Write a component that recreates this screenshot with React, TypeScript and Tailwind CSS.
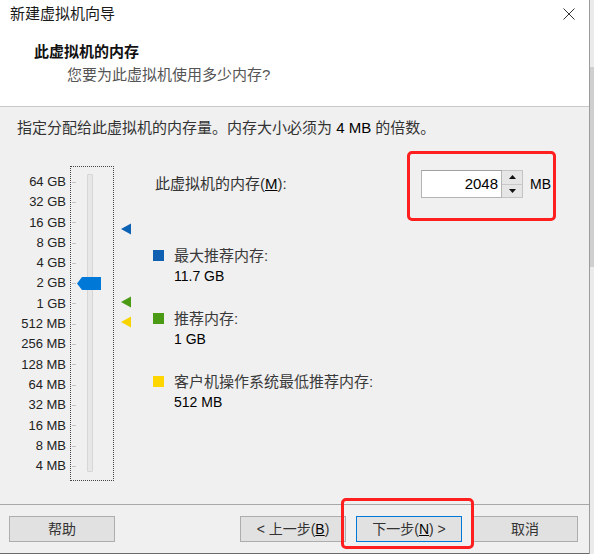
import React from "react";

const FONT = "font-['Liberation_Sans','Noto_Sans_CJK_SC',sans-serif]";

const sizes = [
  "64 GB", "32 GB", "16 GB", "8 GB", "4 GB", "2 GB", "1 GB",
  "512 MB", "256 MB", "128 MB", "64 MB", "32 MB", "16 MB", "8 MB", "4 MB",
];

function Btn({ children, primary }: { children: React.ReactNode; primary?: boolean }) {
  return (
    <div
      className={
        "w-[106px] h-[26px] flex items-center justify-center text-[14px] text-[#333] bg-[#e1e1e1] border " +
        (primary ? "border-[#0078d7]" : "border-[#adadad]")
      }
    >
      {children}
    </div>
  );
}

function Legend({ color, label, value }: { color: string; label: string; value: string }) {
  return (
    <div className="flex flex-row">
      <div className="h-[21px] flex items-center">
        <div className={"w-[11px] h-[11px] " + color} />
      </div>
      <div className="ml-[10px] flex flex-col">
        <div className="h-[21px] leading-[21px] text-[15px] text-[#3a3a3a]">{label}</div>
        <div className="h-[21px] leading-[21px] text-[14px] text-black">{value}</div>
      </div>
    </div>
  );
}

export default function App() {
  return (
    <div className={"relative w-[594px] h-[554px] flex flex-row bg-[#f0f0f0] overflow-hidden " + FONT}>
      {/* window */}
      <div className="w-[590px] h-[554px] flex flex-col border-r border-[#9c9c9c]">
        {/* header */}
        <div className="h-[107px] bg-white border-b border-[#c8c8c8] flex flex-col">
          <div className="h-[28px] flex flex-row items-center pl-[10px] pr-[14px]">
            <span className="text-[15px] text-[#1a1a1a]">新建虚拟机向导</span>
            <svg className="ml-auto" width="12" height="12" viewBox="0 0 12 12">
              <line x1="0.5" y1="0.5" x2="11.5" y2="11.5" stroke="#333" strokeWidth="1" />
              <line x1="11.5" y1="0.5" x2="0.5" y2="11.5" stroke="#333" strokeWidth="1" />
            </svg>
          </div>
          <div className="mt-[14px] pl-[34px] h-[20px] leading-[20px] text-[15px] font-bold text-[#111]">
            此虚拟机的内存
          </div>
          <div className="mt-[3px] pl-[67px] h-[20px] leading-[20px] text-[15px] text-[#555]">
            您要为此虚拟机使用多少内存?
          </div>
        </div>

        {/* body */}
        <div className="h-[397px] flex flex-col pt-[11px]">
          <div className="pl-[17px] h-[20px] leading-[20px] text-[15px] text-[#333]">
            指定分配给此虚拟机的内存量。内存大小必须为 <span className="text-black">4 MB</span> 的倍数。
          </div>

          <div className="mt-[28px] flex flex-row items-start">
            {/* labels */}
            <div className="w-[66px] pt-[6px] flex flex-col items-end">
              {sizes.map((s) => (
                <div key={s} className="h-[20.3px] leading-[20.3px] text-[13px] text-[#222]">
                  {s}
                </div>
              ))}
            </div>

            {/* slider box */}
            <div className="relative ml-[4px] w-[44px] h-[315px] border border-dotted border-[#444] flex flex-row">
              <div className="w-[16px] pt-[5px] pl-[1px] flex flex-col">
                {sizes.map((s) => (
                  <div key={s} className="h-[20.3px] flex items-center">
                    <div className="w-[4px] h-[1px] bg-[#c4c4c4]" />
                  </div>
                ))}
              </div>
              <div className="w-[6px] pt-[7px] pb-[8px] flex">
                <div className="w-full h-full bg-[#e7e7e7] border border-[#d6d6d6] rounded-[1px]" />
              </div>
              <svg className="absolute left-[6px] top-[110px]" width="24" height="13" viewBox="0 0 24 13">
                <polygon points="0,6.5 5,0 24,0 24,13 5,13" fill="#0078d7" />
              </svg>
            </div>

            {/* markers */}
            <svg className="ml-[7px]" width="11" height="315" viewBox="0 0 11 315">
              <polygon points="0,63 10,57.5 10,68.5" fill="#0c62b4" />
              <polygon points="0,136 10,130.5 10,141.5" fill="#4a9a14" />
              <polygon points="0,156 10,150.5 10,161.5" fill="#f7d400" />
            </svg>

            {/* right content */}
            <div className="ml-[21px] flex flex-col">
              <div className="mt-[4px] h-[28px] flex flex-row items-center">
                <div className="w-[268px] pl-[2px] text-[15px] text-[#333]">
                  此虚拟机的内存(<span className="underline text-black">M</span>):
                </div>
                <div className="w-[81px] h-[28px] bg-white border border-[#b4b4b4] border-t-[#a0a0a0] flex items-center justify-end pr-[3px] text-[15px] text-black">
                  2048
                </div>
                <div className="w-[21px] h-[28px] flex flex-col bg-[#f0f0f0] border border-l-0 border-[#c4c4c4]">
                  <div className="flex-1 flex items-center justify-center bg-[#e6e6e6] border-b border-[#c8c8c8]">
                    <svg width="7" height="4" viewBox="0 0 7 4"><polygon points="0,4 3.5,0 7,4" fill="#111" /></svg>
                  </div>
                  <div className="flex-1 flex items-center justify-center bg-[#e6e6e6]">
                    <svg width="7" height="4" viewBox="0 0 7 4"><polygon points="0,0 7,0 3.5,4" fill="#111" /></svg>
                  </div>
                </div>
                <div className="ml-[7px] text-[14px] text-black">MB</div>
              </div>

              <div className="mt-[47px] flex flex-col gap-[21px]">
                <Legend color="bg-[#0f60b0]" label="最大推荐内存:" value="11.7 GB" />
                <Legend color="bg-[#4a9a14]" label="推荐内存:" value="1 GB" />
                <Legend color="bg-[#ffd600]" label="客户机操作系统最低推荐内存:" value="512 MB" />
              </div>
            </div>
          </div>
        </div>

        {/* footer */}
        <div className="h-[50px] border-t border-[#a8a8a8] border-b border-b-[#6a6a6a] flex flex-row items-start pt-[11px] pl-[9px] pr-[11px]">
          <Btn>帮助</Btn>
          <div className="ml-auto flex flex-row gap-[10px]">
            <Btn>
              &lt; 上一步(<span className="underline text-black">B</span>)
            </Btn>
            <Btn primary>
              下一步(<span className="underline text-black">N</span>) &gt;
            </Btn>
            <Btn>取消</Btn>
          </div>
        </div>
      </div>

      {/* right strip */}
      <div className="w-[4px] h-[554px] flex flex-col bg-[#ebebeb]">
        <div className="h-[67px]" />
        <div className="h-[200px] bg-[#cfcfcf]" />
      </div>

      {/* red annotation boxes */}
      <div className="absolute left-[407px] top-[151px] w-[149px] h-[70px] border-[3px] border-[#ff1f1f] rounded-[5px]" />
      <div className="absolute left-[341px] top-[498px] w-[133px] h-[51px] border-[3px] border-[#ff1f1f] rounded-[5px]" />
    </div>
  );
}
